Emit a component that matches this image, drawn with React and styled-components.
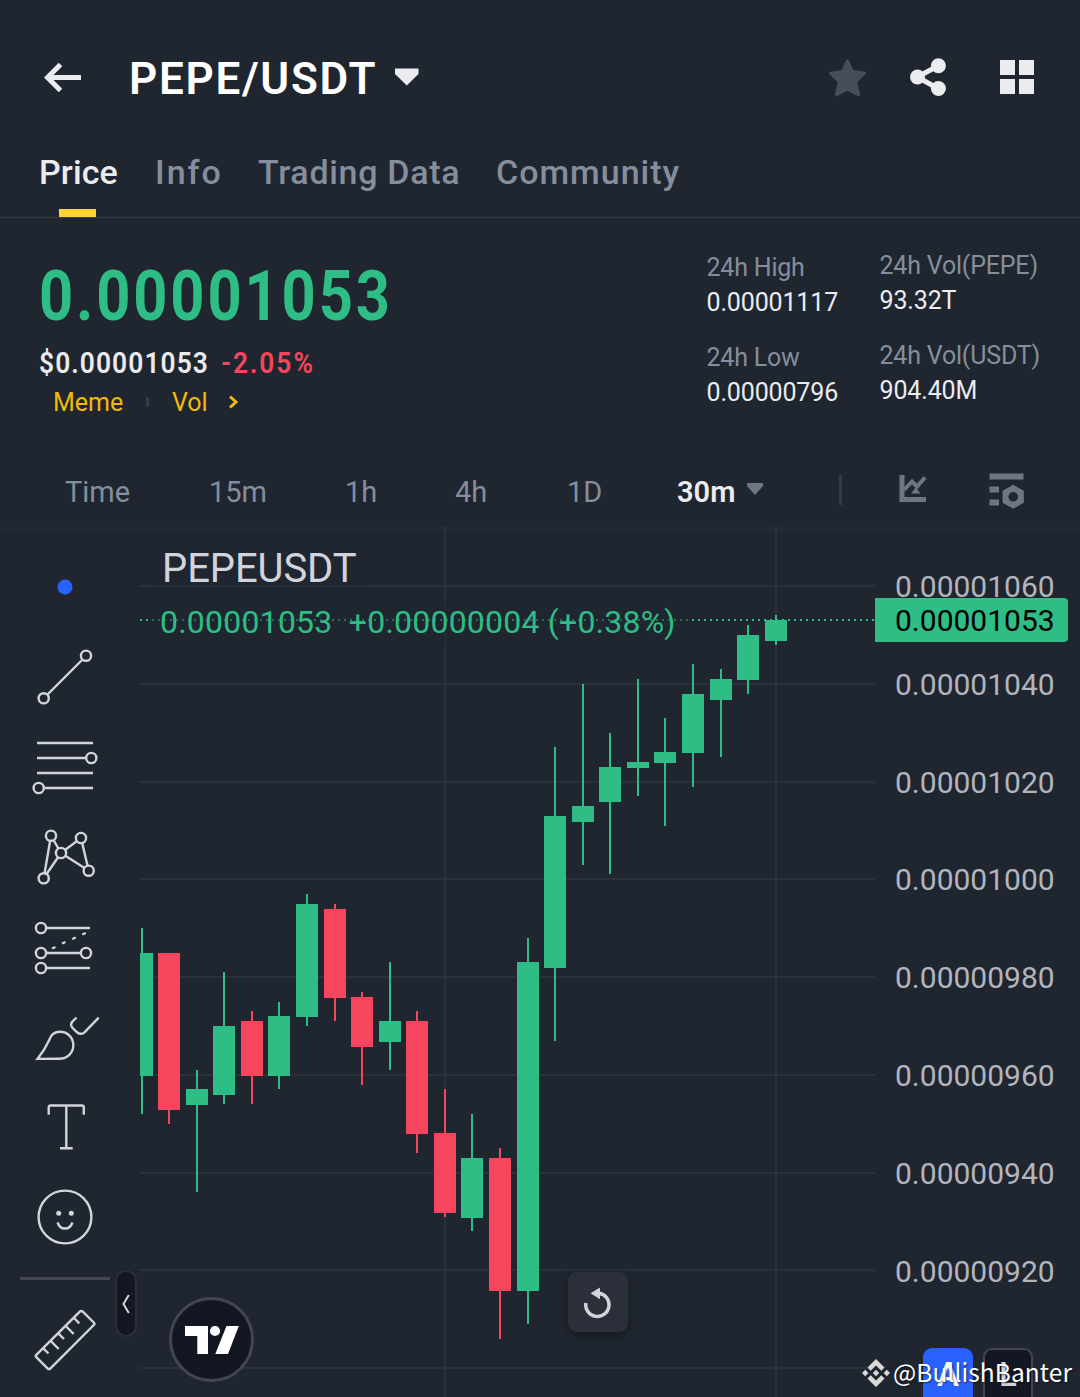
import React from 'react';
import styled, { createGlobalStyle } from 'styled-components';

const GlobalStyle = createGlobalStyle`
  * {
    box-sizing: border-box;
  }
  body {
    margin: 0;
    background: #202630;
  }
`;
const Page = styled.div`
  display: flex;
  flex-direction: column;
  width: 1080px;
  height: 1397px;
  overflow: hidden;
  position: relative;
  background: #202630;
  color: #EAECEF;
  font-family: Roboto, "Liberation Sans", sans-serif;
`;
const Icon = styled.svg`
  display: block;
  flex: none;
`;

/* header */
const Header = styled.div`
  display: flex;
  align-items: center;
  height: 154px;
  padding: 0 45px 0 44px;
`;
const Title = styled.div`
  margin: 3px 18px 0 47px;
  width: 248px;
  font-size: 44px;
  font-weight: 600;
  line-height: 52px;
  letter-spacing: 1.7px;
  color: #FFFFFF;
  white-space: nowrap;
`;
const HeaderActions = styled.div`
  display: flex;
  align-items: center;
  gap: 44px;
  margin-left: auto;
`;

/* tabs */
const Tabs = styled.div`
  display: flex;
  gap: 37px;
  height: 64px;
  padding-left: 39px;
  border-bottom: 1px solid #333B47;
`;
const Tab = styled.div`
  position: relative;
  width: ${props => props.$width}px;
  font-size: 34px;
  font-weight: 500;
  line-height: 36px;
  letter-spacing: ${props => props.$spacing}px;
  white-space: nowrap;
  color: ${props => props.$active ? '#EAECEF' : '#848E9C'};
`;
const TabMark = styled.div`
  position: absolute;
  left: 20px;
  bottom: 0;
  width: 37px;
  height: 8px;
  background: #FCD535;
`;

/* ticker */
const Ticker = styled.div`
  display: flex;
  height: 238px;
`;
const TickerMain = styled.div`
  width: 706.5px;
  padding: 42px 0 0 39px;
`;
const LastPrice = styled.div`
  margin-bottom: 12px;
  font-size: 71px;
  font-weight: 700;
  line-height: 71px;
  letter-spacing: 3.4px;
  transform: scaleX(0.84);
  transform-origin: left;
  color: #2EBD85;
`;
const PriceRow = styled.div`
  display: flex;
  gap: 14px;
  font-size: 30px;
  font-weight: 600;
  line-height: 40px;
  letter-spacing: 1.2px;
  transform: scaleX(0.88);
  transform-origin: left;
`;
const Change = styled.span`
  letter-spacing: 2.2px;
  color: #F6465D;
`;
const Tags = styled.div`
  display: flex;
  align-items: center;
  padding-left: 14px;
  font-size: 25px;
  line-height: 40px;
  color: #F0B90B;
`;
const Tag = styled.span`
  width: ${props => props.$width}px;
`;
const TagDivider = styled.span`
  width: 3px;
  height: 10px;
  margin: 0 23px 2px 23px;
  background: #333B47;
`;
const TagArrow = styled(Icon)`
  margin-bottom: 2px;
`;
const StatColumn = styled.div`
  display: flex;
  flex-direction: column;
  gap: 20px;
  width: 173px;
  padding-top: ${props => props.$top}px;
`;
const Stat = styled.div`
  font-size: 25px;
  line-height: 35px;
  white-space: nowrap;
`;
const StatLabel = styled.div`
  color: #848E9C;
  letter-spacing: -0.2px;
`;
const StatValue = styled.div`
  color: #EAECEF;
  letter-spacing: -0.15px;
`;

/* intervals */
const Intervals = styled.div`
  display: grid;
  grid-template-columns: 144px 136px 110px 112px 110px 162px 60px 90px 40px;
  align-items: center;
  height: 75px;
  padding-left: 65px;
  border-bottom: 4px solid #252B35;
`;
const Interval = styled.div`
  display: flex;
  align-items: center;
  gap: 12px;
  font-size: 29px;
  font-weight: ${props => props.$active ? 600 : 400};
  line-height: 40px;
  color: ${props => props.$active ? '#EAECEF' : '#848E9C'};
`;
const IntervalDivider = styled.div`
  width: 3px;
  height: 30px;
  margin-bottom: 3px;
  background: #333B47;
`;
const IntervalIcon = styled(Icon)`
  margin-bottom: 1px;
`;

/* chart */
const ChartArea = styled.div`
  display: flex;
  height: 866px;
  position: relative;
`;
const Tools = styled.div`
  width: 140px;
  padding: 11px 30px 0 20px;
`;
const ToolDivider = styled.div`
  height: 3px;
  margin: 15px 0;
  background: #434651;
`;
const Plot = styled.div`
  position: relative;
  width: 735px;
`;
const ChartSvg = styled(Icon)`
  overflow: visible;
`;
const Legend = styled.div`
  position: absolute;
  top: 12px;
  left: 12px;
  display: flex;
  flex-direction: column;
`;
const LegendName = styled.div`
  width: 216px;
  height: 50px;
  padding-left: 10px;
  font-size: 40px;
  line-height: 52px;
  letter-spacing: -0.1px;
  color: #D1D4DC;
  background: rgba(32, 38, 48, 0.5);
`;
const LegendValues = styled.div`
  width: 540px;
  height: 48px;
  margin-top: 6px;
  padding-left: 8px;
  font-size: 32px;
  line-height: 46px;
  letter-spacing: 0.22px;
  white-space: pre;
  color: #2EBD85;
  background: rgba(32, 38, 48, 0.5);
`;
const Axis = styled.div`
  position: relative;
  width: 205px;
  padding-top: 7px;
`;
const AxisLabel = styled.div`
  height: 97.8px;
  padding-left: 20px;
  font-size: 30px;
  line-height: 97.8px;
  color: #B2B5BE;
`;
const PriceBadge = styled.div`
  position: absolute;
  top: 67px;
  left: 0;
  width: 193px;
  height: 44px;
  padding-left: 20px;
  border-radius: 0 4px 4px 0;
  font-size: 30px;
  line-height: 45px;
  color: #000000;
  background: #2EBD85;
`;
const ScaleButtons = styled.div`
  position: absolute;
  top: 817px;
  left: 48px;
  display: flex;
  gap: 10px;
`;
const ScaleButton = styled.div`
  width: 50px;
  height: 60px;
  border: 2px solid ${props => props.$active ? '#2962FF' : '#434651'};
  border-radius: 9px;
  font-size: 33px;
  font-weight: 500;
  line-height: 50px;
  text-align: center;
  color: ${props => props.$active ? '#FFFFFF' : '#D1D4DC'};
  background: ${props => props.$active ? '#2962FF' : '#131722'};
`;
const CollapseHandle = styled.div`
  position: absolute;
  top: 739px;
  left: 115px;
  display: flex;
  align-items: center;
  justify-content: center;
  width: 22px;
  height: 67px;
  border: 2px solid #2A2E39;
  border-radius: 11px;
  background: #131722;
`;
const ProviderLogo = styled.div`
  position: absolute;
  top: 766px;
  left: 169px;
  display: flex;
  align-items: center;
  justify-content: center;
  width: 85px;
  height: 85px;
  border: 3px solid #434651;
  border-radius: 50%;
  background: #131722;
`;
const ResetButton = styled.div`
  position: absolute;
  top: 741px;
  left: 568px;
  width: 60px;
  height: 60px;
  border-radius: 9px;
  background: #2A2F3A;
  box-shadow: 0 4px 8px rgba(0, 0, 0, 0.35);
`;
const Watermark = styled.div`
  position: absolute;
  right: 8px;
  bottom: 7px;
  display: flex;
  align-items: center;
  gap: 3px;
  font-family: "Noto Sans CJK SC", "Noto Sans", sans-serif;
  font-size: 24.5px;
  line-height: 36px;
  letter-spacing: 0.08px;
  color: #FFFFFF;
  text-shadow: 1px 1px 2px rgba(0, 0, 0, 0.6);
`;
const WatermarkText = styled.span`
  margin-top: -2px;
`;

const UP = '#2EBD85';
const DOWN = '#F6465D';
const GRID = '#2B303B';
const PLOT_LEFT = 140;

// wick x, high, low, body top, body bottom, color
const candles = [
  [141, 928, 1114, 953, 1076, UP],
  [168, 953, 1124, 953, 1110, DOWN],
  [196, 1070, 1192, 1089, 1105, UP],
  [223, 972, 1104, 1026, 1095, UP],
  [251, 1011, 1104, 1021, 1076, DOWN],
  [278, 1002, 1089, 1016, 1076, UP],
  [306, 894, 1026, 904, 1017, UP],
  [334, 904, 1021, 909, 998, DOWN],
  [361, 992, 1085, 997, 1047, DOWN],
  [389, 962, 1070, 1021, 1042, UP],
  [416, 1011, 1153, 1021, 1134, DOWN],
  [444, 1089, 1217, 1133, 1213, DOWN],
  [471, 1114, 1231, 1158, 1218, UP],
  [499, 1148, 1339, 1158, 1291, DOWN],
  [527, 938, 1324, 962, 1291, UP],
  [554, 747, 1041, 816, 968, UP],
  [582, 684, 865, 806, 822, UP],
  [609, 733, 874, 767, 802, UP],
  [637, 679, 796, 762, 768, UP],
  [664, 718, 826, 752, 763, UP],
  [692, 664, 787, 694, 753, UP],
  [720, 669, 757, 679, 700, UP],
  [747, 625, 694, 635, 680, UP],
  [775, 615, 645, 620, 641, UP],
];
const gridRows = [585, 683, 781, 878, 976, 1074, 1172, 1269, 1367];
const gridCols = [444, 775];
const axisPrices = [
  '0.00001060', '0.00001040', '0.00001020', '0.00001000',
  '0.00000980', '0.00000960', '0.00000940', '0.00000920',
];

const tabs = [
  { name: 'Price', width: 79, spacing: 0.1, active: true },
  { name: 'Info', width: 66, spacing: 2 },
  { name: 'Trading Data', width: 201, spacing: 0.7 },
  { name: 'Community', width: 183, spacing: 1 },
];

const Candle = ({ x, high, low, top, bottom, color }) => {
  // the oldest candle is cut off by the plot's left edge
  const left = Math.max(x - 10, PLOT_LEFT);
  return (
    <g fill={color}>
      <rect x={x} y={high} width="2" height={low - high} />
      <rect x={left} y={top} width={x + 12 - left} height={bottom - top} />
    </g>
  );
};

const Chart = () => (
  <ChartSvg width="735" height="866" viewBox="140 531 735 866" shapeRendering="crispEdges">
    {gridCols.map(x => <rect key={x} x={x} y="527" width="2" height="870" fill={GRID} />)}
    {gridRows.map(y => <rect key={y} x="140" y={y} width="735" height="2" fill={GRID} />)}
    {candles.map(([x, high, low, top, bottom, color]) => (
      <Candle key={x} x={x} high={high} low={low} top={top} bottom={bottom} color={color} />
    ))}
    <path d="M140 620H875" stroke={UP} strokeWidth="2" strokeDasharray="2 4" />
  </ChartSvg>
);

const Tool = ({ children }) => (
  <Icon width="90" height="90" viewBox="0 0 90 90" fill="none" stroke="#D1D4DC" strokeWidth="2.4">
    {children}
  </Icon>
);

const Dot = ({ x, y }) => <circle cx={x} cy={y} r="5.1" fill="#202630" />;

const ToolBar = () => (
  <Tools>
    <Tool><circle cx="45" cy="45" r="7.5" fill="#2962FF" stroke="none" /></Tool>
    <Tool>
      <path d="M24 66L66 24" />
      <Dot x="23.7" y="66.3" /><Dot x="66" y="23.7" />
    </Tool>
    <Tool>
      <path d="M17 21H73M17 36H71M17 51H73M19 66H73" />
      <Dot x="71.3" y="36" /><Dot x="18.7" y="66" />
    </Tool>
    <Tool>
      <path d="M23.7 66.3L31 23.7L41 41L61 26L68.7 58.7L41 41Z" />
      <Dot x="31" y="23.7" /><Dot x="61" y="26" /><Dot x="41" y="41" />
      <Dot x="23.7" y="66.3" /><Dot x="68.7" y="58.7" />
    </Tool>
    <Tool>
      <path d="M21 26H70M21 51H66M21 66H70" />
      <path d="M32 46.5L35.5 45M42 41.5L45.5 40M52.2 37L55.8 35.5M62.2 32.5L65.8 31" />
      <Dot x="21" y="26" /><Dot x="21" y="51" /><Dot x="21" y="66" /><Dot x="66" y="51" />
    </Tool>
    <Tool>
      <path d="M17.5 66.9C24 59 27 53 29.5 47.5C31 42.5 35 39.7 40 39.7C47.5 39.7 53.3 45.5 53.3 53C53.3 61 47.5 66.7 39 66.7Z" />
      <path d="M56.5 25.5L52.2 29.8Q50 32.5 52.2 35.5L57 40.3Q60.8 43.4 64.5 40.3L78.7 25.7" />
    </Tool>
    <Tool><path d="M28.7 32.8V25.5Q28.7 23.5 30.7 23.5H61.8Q63.8 23.5 63.8 25.5V32.8M46.3 23.5V66.3M40 66.3H52.7" /></Tool>
    <Tool>
      <circle cx="45" cy="45" r="26.4" />
      <circle cx="38.7" cy="41.3" r="2.5" fill="#D1D4DC" stroke="none" />
      <circle cx="51.3" cy="41.3" r="2.5" fill="#D1D4DC" stroke="none" />
      <path d="M37.6 50.3C40 58.6 50 58.6 52.4 50.3" />
    </Tool>
    <ToolDivider />
    <Tool>
      <path d="M59.8 16.7Q61.3 15.2 62.8 16.7L73.8 27.5Q75 28.8 73.8 30L30.5 73.3Q29 74.8 27.5 73.3L16.3 62.2Q15 61 16.3 59.8Z" />
      <path d="M23.3 53.3L28.5 58.5M30.7 46L38.7 54M38.3 38.3L44 44M45.7 31L53.7 39M54 23L59.3 28.3" />
    </Tool>
  </Tools>
);

const Stats = ({ top, items }) => (
  <StatColumn $top={top}>
    {items.map(([label, value]) => (
      <Stat key={label}>
        <StatLabel>{label}</StatLabel>
        <StatValue>{value}</StatValue>
      </Stat>
    ))}
  </StatColumn>
);

const App = () => {
  return (
    <Page>
      <GlobalStyle />
      <Header>
        <Icon width="38" height="32" viewBox="0 0 38 32" fill="none" stroke="#EAECEF" strokeWidth="5">
          <path d="M37 16.5H4M16.5 3.5L3.5 16.5L16.5 29.5" />
        </Icon>
        <Title>PEPE/USDT</Title>
        <Icon width="24" height="18" viewBox="0 0 24 18" fill="#EAECEF">
          <path d="M0 0.5H23.5V6L11.8 17.5L0 6Z" />
        </Icon>
        <HeaderActions>
          <Icon width="38" height="40" viewBox="0 0 38 40" fill="#474D59" stroke="#474D59" strokeWidth="3" strokeLinejoin="round">
            <path d="M18.5 4L23.5 14.6L35.5 16.2L26.7 24.8L29.5 37.6L18.5 32.2L7.5 37.6L10.3 24.8L1.5 16.2L13.5 14.6Z" />
          </Icon>
          <Icon width="36" height="40" viewBox="0 0 36 40" overflow="visible" fill="#EAECEF">
            <path d="M27.4 8.7L6.3 20L27.4 31.7" fill="none" stroke="#EAECEF" strokeWidth="5" />
            <circle cx="27.4" cy="8.7" r="7.5" />
            <circle cx="6.5" cy="20" r="7.5" />
            <circle cx="27.4" cy="31.5" r="7.5" />
          </Icon>
          <Icon width="44" height="34" viewBox="-9 0 44 34" fill="#EAECEF">
            <path d="M0 0H15V15H0ZM19 0H34V15H19ZM0 19H15V34H0ZM19 19H34V34H19Z" />
          </Icon>
        </HeaderActions>
      </Header>
      <Tabs>
        {tabs.map(tab => (
          <Tab key={tab.name} $width={tab.width} $spacing={tab.spacing} $active={tab.active}>
            {tab.name}
            {tab.active && <TabMark />}
          </Tab>
        ))}
      </Tabs>
      <Ticker>
        <TickerMain>
          <LastPrice>0.00001053</LastPrice>
          <PriceRow>
            <span>$0.00001053</span>
            <Change>-2.05%</Change>
          </PriceRow>
          <Tags>
            <Tag $width={70}>Meme</Tag>
            <TagDivider />
            <Tag $width={56}>Vol</Tag>
            <TagArrow width="12" height="14" viewBox="0 0 12 14" fill="none" stroke="#F0B90B" strokeWidth="3">
              <path d="M2 1.5L8 7L2 12.5" />
            </TagArrow>
          </Tags>
        </TickerMain>
        <Stats top={31.5} items={[['24h High', '0.00001117'], ['24h Low', '0.00000796']]} />
        <Stats top={29.5} items={[['24h Vol(PEPE)', '93.32T'], ['24h Vol(USDT)', '904.40M']]} />
      </Ticker>
      <Intervals>
        <Interval>Time</Interval>
        <Interval>15m</Interval>
        <Interval>1h</Interval>
        <Interval>4h</Interval>
        <Interval>1D</Interval>
        <Interval $active>
          30m
          <IntervalIcon width="16" height="16" viewBox="0 0 16 16" fill="#707680">
            <path d="M0 0H16V3L8 12L0 3Z" />
          </IntervalIcon>
        </Interval>
        <IntervalDivider />
        <IntervalIcon width="28" height="32" viewBox="899 476 28 32" fill="#707680">
          <path d="M899.5 476H904.5V498H926V503H899.5Z" />
          <path d="M904 491L912 482.5L917 487.5L925 478.5" fill="none" stroke="#707680" strokeWidth="4" />
          <path d="M915.7 488.5L920.5 494.5H911Z" />
        </IntervalIcon>
        <IntervalIcon width="36" height="37" viewBox="989 472.5 36 37" fill="#707680">
          <path d="M989.5 473H1023.5V479H989.5ZM989.5 486H999V492H989.5ZM989.5 499H999V505H989.5Z" />
          <path fillRule="evenodd" d="M1013.2 484.3L1023.8 490.3V502.3L1013.2 508.3L1002.6 502.3V490.3ZM1013.2 491.5A4.8 4.8 0 1 0 1013.2 501.1A4.8 4.8 0 1 0 1013.2 491.5Z" />
        </IntervalIcon>
      </Intervals>
      <ChartArea>
        <ToolBar />
        <Plot>
          <Chart />
          <Legend>
            <LegendName>PEPEUSDT</LegendName>
            <LegendValues>0.00001053  +0.00000004 (+0.38%)</LegendValues>
          </Legend>
        </Plot>
        <Axis>
          {axisPrices.map(price => <AxisLabel key={price}>{price}</AxisLabel>)}
          <PriceBadge>0.00001053</PriceBadge>
          <ScaleButtons>
            <ScaleButton $active>A</ScaleButton>
            <ScaleButton>L</ScaleButton>
          </ScaleButtons>
        </Axis>
        <CollapseHandle>
          <Icon width="8" height="20" viewBox="0 0 8 20" fill="none" stroke="#D1D4DC" strokeWidth="2">
            <path d="M6.8 1L1.5 10L6.8 19" />
          </Icon>
        </CollapseHandle>
        <ProviderLogo>
          <Icon width="54" height="28" viewBox="185 1327 54 28" fill="#FFFFFF">
            <path d="M185 1327H208V1355H197.3V1337H185Z" />
            <circle cx="215" cy="1332" r="5.1" />
            <path d="M226.5 1327H238.8L228 1355H215.3Z" />
          </Icon>
        </ProviderLogo>
        <ResetButton>
          <Icon width="60" height="60" viewBox="568 1272 60 60" fill="none" stroke="#D1D4DC" strokeWidth="3.4">
            <path d="M585.8 1303A11.7 11.7 0 1 0 599 1293.2" />
            <path d="M590.5 1293.3L600 1287.5V1299.2Z" fill="#D1D4DC" stroke="none" />
          </Icon>
        </ResetButton>
      </ChartArea>
      <Watermark>
        <Icon width="28" height="28" viewBox="0 0 28 28" fill="#D9D9D9">
          <path d="M14 0L22.5 8.5L19.3 11.7L14 6.4L8.7 11.7L5.5 8.5ZM14 28L22.5 19.5L19.3 16.3L14 21.6L8.7 16.3L5.5 19.5Z" />
          <path d="M14 10.8L17.2 14L14 17.2L10.8 14ZM3.2 10.8L6.4 14L3.2 17.2L0 14ZM24.8 10.8L28 14L24.8 17.2L21.6 14Z" />
        </Icon>
        <WatermarkText>@BullishBanter</WatermarkText>
      </Watermark>
    </Page>
  );
};

export default App;
